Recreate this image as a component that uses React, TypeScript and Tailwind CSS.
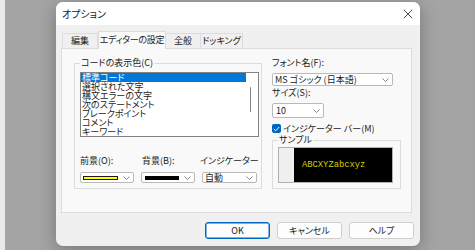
import React from "react";

const Chevron = () => (
  <svg width="7" height="4" viewBox="0 0 7 4" className="shrink-0">
    <path d="M0.5 0.5 L3.5 3.5 L6.5 0.5" fill="none" stroke="#6a6a6a" strokeWidth="0.8" />
  </svg>
);

const items = [
  "標準コード",
  "選択された文字",
  "構文エラーの文字",
  "次のステートメント",
  "ブレークポイント",
  "コメント",
  "キーワード",
];

export default function App() {
  return (
    <div className="w-[475px] h-[250px] overflow-hidden flex bg-[#a4a4a4] text-[#1a1a1a] font-['Noto_Sans_CJK_JP',sans-serif] [font-feature-settings:'palt']">
      <div className="w-[5px] h-full bg-[#e9e9e9] shrink-0" />
      <div className="ml-[51px] mt-[2px] w-[364px] h-[244px] shrink-0 rounded-[7px] overflow-hidden bg-[#f0f0f0] shadow-[0_4px_18px_rgba(0,0,0,0.28)] flex flex-col">
        {/* title bar */}
        <div className="h-[23px] bg-white flex items-center justify-between pl-[6px] pr-[7px] shrink-0">
          <span className="text-[10px] leading-[12px]">オプション</span>
          <svg width="10" height="10" viewBox="0 0 10 10">
            <path d="M0.8 0.8 L9.2 9.2 M9.2 0.8 L0.8 9.2" stroke="#333" strokeWidth="0.9" fill="none" />
          </svg>
        </div>
        {/* tabs */}
        <div className="mt-[6px] ml-[6px] h-[17px] flex items-end shrink-0 relative z-10 text-[9px] leading-[10px] whitespace-nowrap">
          <div className="w-[36px] h-[15px] border border-b-0 border-[#dcdcdc] bg-[#f0f0f0] flex items-center justify-center">編集</div>
          <div className="w-[68px] h-[18px] -mb-px border border-b-0 border-[#dcdcdc] bg-[#f9f9f9] flex items-center justify-center pb-[1px] tracking-[-0.3px]">エディターの設定</div>
          <div className="w-[35px] h-[15px] border border-l-0 border-b-0 border-[#dcdcdc] bg-[#f0f0f0] flex items-center justify-center">全般</div>
          <div className="w-[42px] h-[15px] border border-l-0 border-b-0 border-[#dcdcdc] bg-[#f0f0f0] flex items-center justify-center">ドッキング</div>
        </div>
        {/* panel */}
        <div className="ml-[5px] w-[351px] h-[165px] shrink-0 border border-[#dcdcdc] bg-[#f9f9f9] flex items-start pl-[12px] pt-[9px] text-[9px] leading-[10px]">
          {/* left group */}
          <fieldset className="w-[188px] border border-[#dcdcdc] pl-[5px] pb-[5px] flex flex-col">
            <legend className="px-[1px] h-[10px] leading-[10px]">コードの表示色(C)</legend>
            <div className="mt-[4px] w-[179px] h-[65px] border border-[#828282] bg-white flex">
              <div className="w-[165px] flex flex-col text-[9px]">
                {items.map((t, i) => (
                  <div
                    key={t}
                    className={
                      i === 0
                        ? "h-[9px] leading-[9px] bg-[#0078d7] text-white pl-[1px] whitespace-nowrap"
                        : "h-[9px] leading-[9px] pl-[1px] whitespace-nowrap"
                    }
                  >
                    {t}
                  </div>
                ))}
              </div>
              <div className="flex-1 flex justify-center pt-[14px] pr-[3px]">
                <div className="w-[1.5px] h-[25px] bg-[#858585] rounded-full" />
              </div>
            </div>
            <div className="mt-[19px] flex gap-[7px]">
              <div className="flex flex-col w-[54px]">
                <span className="h-[10px]">前景(O):</span>
                <div className="mt-[6px] h-[11px] bg-white border border-[#b9b9b9] rounded-[2px] flex items-center justify-between pl-[2px] pr-[3px]">
                  <div className="w-[35px] h-[4px] bg-[#ffff00] border border-[#1a1a1a]" />
                  <Chevron />
                </div>
              </div>
              <div className="flex flex-col w-[54px]">
                <span className="h-[10px] pl-[1px]">背景(B):</span>
                <div className="mt-[6px] h-[11px] bg-white border border-[#b9b9b9] rounded-[2px] flex items-center justify-between pl-[3px] pr-[3px]">
                  <div className="w-[34px] h-[4px] bg-[#000000]" />
                  <Chevron />
                </div>
              </div>
              <div className="flex flex-col w-[55px]">
                <span className="h-[10px] -ml-[2px] whitespace-nowrap">インジケーター</span>
                <div className="mt-[6px] h-[11px] bg-white border border-[#b9b9b9] rounded-[2px] flex items-center justify-between pl-[2px] pr-[3px]">
                  <span className="leading-[9px]">自動</span>
                  <Chevron />
                </div>
              </div>
            </div>
          </fieldset>
          {/* right column */}
          <div className="ml-[10px] flex flex-col w-[130px]">
            <span className="h-[10px]">フォント名(F):</span>
            <div className="mt-[5px] w-[121px] h-[13px] bg-white border border-[#b9b9b9] rounded-[2px] flex items-center justify-between pl-[2px] pr-[3px]">
              <span className="leading-[10px]">MS ゴシック (日本語)</span>
              <Chevron />
            </div>
            <span className="mt-[2px] h-[10px]">サイズ(S):</span>
            <div className="mt-[5px] w-[52px] h-[15px] bg-white border border-[#b9b9b9] rounded-[2px] flex items-center justify-between pl-[3px] pr-[3px]">
              <span className="leading-[10px]">10</span>
              <Chevron />
            </div>
            <div className="mt-[6px] h-[9px] flex items-center">
              <div className="w-[9px] h-[9px] rounded-[2px] bg-[#0067c0] flex items-center justify-center shrink-0">
                <svg width="7" height="6" viewBox="0 0 7 6">
                  <path d="M0.8 3 L2.7 4.8 L6.2 1" fill="none" stroke="white" strokeWidth="1" />
                </svg>
              </div>
              <span className="ml-[2px] whitespace-nowrap">インジケーター バー(M)</span>
            </div>
            <fieldset className="mt-[2px] w-[129px] border border-[#dcdcdc] pl-[5px] pb-[5px] flex flex-col">
              <legend className="px-[1px] h-[10px] leading-[10px]">サンプル</legend>
              <div className="mt-[2px] w-[115px] h-[36px] border border-[#b0b0b0] flex">
                <div className="w-[15px] h-full bg-[#efefef]" />
                <div className="flex-1 h-full bg-black flex items-center pl-[8px]">
                  <span className="font-['Liberation_Mono',monospace] text-[8.8px] leading-[10px] text-[#d0d000]">ABCXYZabcxyz</span>
                </div>
              </div>
            </fieldset>
          </div>
        </div>
        {/* buttons */}
        <div className="mt-[9px] flex justify-end gap-[7px] pr-[6px] text-[9px] leading-[10px] shrink-0">
          <div className="w-[65px] h-[17px] rounded-[3px] border border-[#0067c0] bg-[#fdfdfd] flex items-center justify-center shadow-[inset_0_0_0_0.5px_#0067c0]">OK</div>
          <div className="w-[65px] h-[17px] rounded-[3px] border border-[#d0d0d0] bg-[#fdfdfd] flex items-center justify-center">キャンセル</div>
          <div className="w-[65px] h-[17px] rounded-[3px] border border-[#d0d0d0] bg-[#fdfdfd] flex items-center justify-center">ヘルプ</div>
        </div>
      </div>
    </div>
  );
}
